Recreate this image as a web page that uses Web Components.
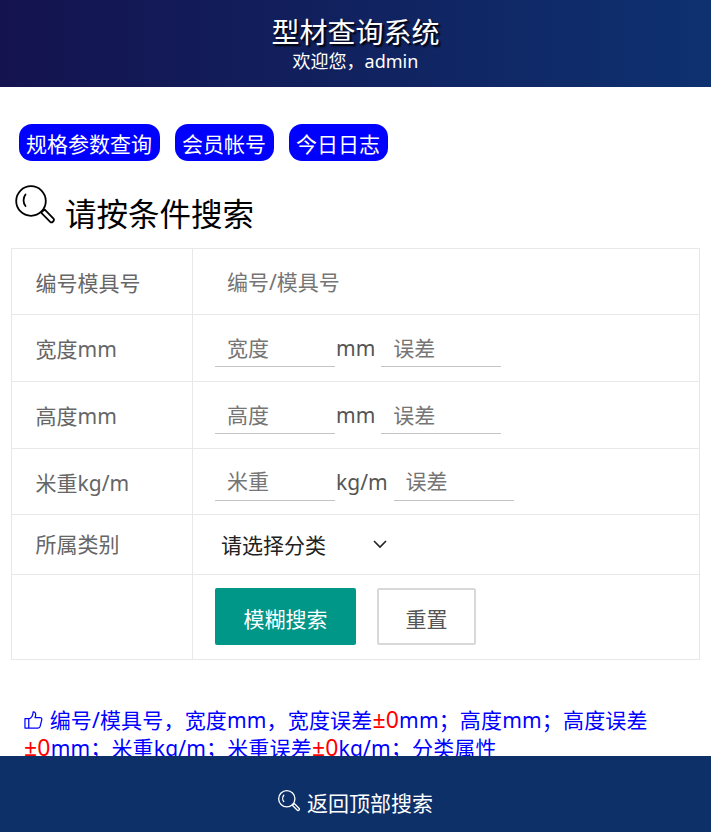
<!DOCTYPE html>
<html lang="zh-CN">
<head>
<meta charset="utf-8">
<title>型材查询系统</title>
<style>
  html, body { margin: 0; padding: 0; background: #fff; }
  body { font-family: "Noto Sans", "Noto Sans CJK SC", sans-serif; height: 832px; overflow: hidden; }
  main-nav { margin: 37px 0 0 19px; }
  search-title { margin: 25px 0 0 15px; }
  search-form { margin: 10px 11px 0 11px; }
  search-note { margin: 46px 24px 0 24px; }
</style>
</head>
<body>
<app-header title="型材查询系统" sub="欢迎您，admin"></app-header>
<main-nav>
  <nav-pill>规格参数查询</nav-pill>
  <nav-pill>会员帐号</nav-pill>
  <nav-pill>今日日志</nav-pill>
</main-nav>
<search-title>请按条件搜索</search-title>
<search-form></search-form>
<search-note></search-note>
<back-bar>返回顶部搜索</back-bar>

<script>
// shared magnifier, the handle is a small open capsule
const lens = (size, color, sw) => `
  <svg width="${size}" height="${size}" viewBox="0 0 40 40" fill="none" stroke="${color}" stroke-width="${sw}" stroke-linecap="round">
    <circle cx="16" cy="16" r="14.8"/>
    <path d="M10.500 9.500c-2.600 3.200-2.600 8.500 0 11.500"/>
    <path d="M27 26.500l2.800-1.800 8.700 8.800c1.500 1.900-1.500 5-3.300 3.300l-8.700-8.700z"/>
  </svg>`;

class AppHeader extends HTMLElement {
  constructor() {
    super();
    this.attachShadow({ mode: "open" });
  }
  connectedCallback() {
    this.shadowRoot.innerHTML = `
      <style>
        :host { display: block; height: 87px; box-sizing: border-box; padding-top: 15px; text-align: center; color: #fff;
          background: linear-gradient(90deg, #14134f, #0e3170); }
        h1 { margin: 0; font-size: 28px; font-weight: 400; line-height: 34px; text-shadow: 2px 2px 2px #000; }
        p { margin: 0; font-size: 18px; line-height: 25px; }
      </style>
      <h1>${this.getAttribute("title")}</h1>
      <p>${this.getAttribute("sub")}</p>`;
  }
}

class MainNav extends HTMLElement {
  constructor() {
    super();
    this.attachShadow({ mode: "open" });
    this.shadowRoot.innerHTML = `
      <style>:host { display: flex; gap: 15px; }</style>
      <slot></slot>`;
  }
}

class NavPill extends HTMLElement {
  constructor() {
    super();
    this.attachShadow({ mode: "open" });
    this.shadowRoot.innerHTML = `
      <style>
        :host { display: block; height: 37px; padding: 0 8px 0 7px; border-radius: 13px; background: #00f; color: #fff;
          font-size: 21px; line-height: 40px; }
      </style>
      <slot></slot>`;
  }
}

class SearchTitle extends HTMLElement {
  constructor() {
    super();
    this.attachShadow({ mode: "open" });
    this.shadowRoot.innerHTML = `
      <style>
        :host { display: flex; align-items: flex-start; gap: 10px; height: 52px; color: #000; font-size: 31.5px; line-height: 56px; }
        svg { display: block; flex: none; margin-top: -1px; }
      </style>
      ${lens(40, "#000", 1.8)}
      <span><slot></slot></span>`;
  }
}

class FormRow extends HTMLElement {
  constructor() {
    super();
    this.attachShadow({ mode: "open" });
    this.shadowRoot.innerHTML = `
      <style>
        :host { display: grid; grid-template-columns: 181px 1fr; border-bottom: 1px solid #e8e8e8; height: var(--h, 66px);
          font-size: 21px; color: #666; }
        .label { display: flex; align-items: center; padding: 0 0 var(--lift, 0) 23.500px; border-right: 1px solid #e8e8e8; }
        .field { display: flex; align-items: center; padding: 0 0 0 22px; }
      </style>
      <div class="label"><slot name="label"></slot></div>
      <div class="field"><slot></slot></div>`;
  }
}

class LineInput extends HTMLElement {
  constructor() {
    super();
    this.attachShadow({ mode: "open" });
    const ph = this.getAttribute("placeholder");
    this.shadowRoot.innerHTML = `
      <style>
        :host { display: block; width: 120px; }
        input { display: block; width: 100%; height: 38px; box-sizing: border-box; margin: 0; padding: 0 12px; border: 0;
          border-bottom: 1px solid #c4c4c4; outline: 0; background: none; font: inherit; color: #333; }
        input::placeholder { color: #757575; opacity: 1; }
        :host([wide]) { width: 480px; }
        :host([wide]) input { border-bottom: 0; }
      </style>
      <input type="text" placeholder="${ph}" aria-label="${ph}">`;
  }
}

class SearchForm extends HTMLElement {
  constructor() {
    super();
    this.attachShadow({ mode: "open" });
    const tol = (unit, name, cls) => `
      <form-row class="${cls}">
        <span slot="label">${name}${unit}</span>
        <line-input placeholder="${name}"></line-input>
        <span class="unit">${unit}</span>
        <line-input placeholder="误差"></line-input>
      </form-row>`;
    this.shadowRoot.innerHTML = `
      <style>
        :host { display: block; box-sizing: border-box; border: 1px solid #e8e8e8; border-bottom: 0; font-size: 21px; }
        .unit { margin: 0 6px 0 1px; color: #555; }
        .sel { position: relative; display: block; width: 180px; margin-left: -7px; }
        select { appearance: none; display: block; width: 100%; height: 40px; padding: 0 0 0 13px; border: 0; margin: 0; background: none;
          font: inherit; color: #222; outline: 0; }
        .sel svg { position: absolute; left: 165px; top: 15px; }
        .btn { box-sizing: border-box; height: 57px; margin: 0 0 2px; padding: 3px 0 0; border-radius: 2px; font: inherit; }
        .go { width: 141px; border: 0; background: #009688; color: #fff; margin-right: 21px; }
        .reset { width: 99px; border: 2px solid #d8d8d8; background: #fff; color: #555; }
        .short { --h: 65px; }
        .last { --h: 84px; }
        .sel-row { --h: 59px; --lift: 3px; }
      </style>
      <form-row class="short">
        <span slot="label">编号模具号</span>
        <line-input wide placeholder="编号/模具号"></line-input>
      </form-row>
      ${tol("mm", "宽度", "")}
      ${tol("mm", "高度", "")}
      ${tol("kg/m", "米重", "short")}
      <form-row class="sel-row">
        <span slot="label">所属类别</span>
        <span class="sel">
          <select aria-label="所属类别"><option>请选择分类</option></select>
          <svg width="14" height="9" viewBox="0 0 14 9" fill="none" stroke="#222" stroke-width="1.6"><path d="M1 1l6 6 6-6"/></svg>
        </span>
      </form-row>
      <form-row class="last">
        <button class="btn go" type="button">模糊搜索</button>
        <button class="btn reset" type="button">重置</button>
      </form-row>`;
  }
}

class SearchNote extends HTMLElement {
  constructor() {
    super();
    this.attachShadow({ mode: "open" });
    this.shadowRoot.innerHTML = `
      <style>
        :host { display: block; color: #00f; font-size: 21px; line-height: 28px; letter-spacing: .17px; }
        b { font-weight: 400; color: #f00; font-size: 23px; line-height: 20px; }
        svg { vertical-align: -1px; margin-right: 1px; }
      </style>
      <svg width="19" height="18" viewBox="0 0 20 19" fill="none" stroke="#00f" stroke-width="1.3" stroke-linejoin="round">
        <path d="M1 8h4v10H1zM5 8.500c2.500-1 4.500-4 4.600-7.500 2.600-.4 3.400 2.500 2 6h5.400c1.400 0 2 1 1.700 2.300l-1.700 7c-.3 1.100-1 1.700-2.200 1.700H5"/>
      </svg>
      编号/模具号，宽度mm，宽度误差<b>±0</b>mm；高度mm；高度误差<b>±0</b>mm；米重kg/m；米重误差<b>±0</b>kg/m；分类属性`;
  }
}

class BackBar extends HTMLElement {
  constructor() {
    super();
    this.attachShadow({ mode: "open" });
    this.shadowRoot.innerHTML = `
      <style>
        :host { position: fixed; left: 0; right: 0; bottom: 0; height: 76px; box-sizing: border-box; padding-top: 16px;
          display: flex; align-items: center; justify-content: center; gap: 7px; background: #0e3069; color: #fff; font-size: 21px; }
        svg { margin-top: -2px; }
      </style>
      ${lens(22, "#fff", 2.4)}
      <span><slot></slot></span>`;
  }
}

customElements.define("app-header", AppHeader);
customElements.define("main-nav", MainNav);
customElements.define("nav-pill", NavPill);
customElements.define("search-title", SearchTitle);
customElements.define("form-row", FormRow);
customElements.define("line-input", LineInput);
customElements.define("search-form", SearchForm);
customElements.define("search-note", SearchNote);
customElements.define("back-bar", BackBar);
</script>
</body>
</html>
